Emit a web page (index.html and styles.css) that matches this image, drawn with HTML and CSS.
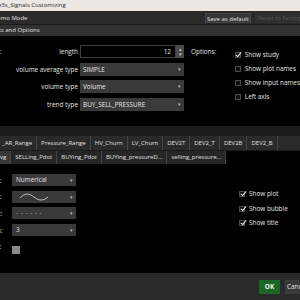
FILE: index.html
```html
<!DOCTYPE html>
<html>
<head>
<meta charset="utf-8">
<link rel="stylesheet" href="styles.css">
</head>
<body>
<div class="titlebar"><span class="title">e3s_Signals Customizing</span></div>
<div class="toolbar">
  <span class="mode">Demo Mode</span>
  <span class="spacer"></span>
  <span class="tbtn save">Save as default</span>
  <span class="tbtn reset">Reset to factory</span>
</div>
<div class="section"><span class="sec-title">Inputs and Options</span></div>
<div class="inputs">
  <div class="fields">
    <div class="frow"><span class="lead">s:</span><span class="lbl">length</span>
      <div class="num"><span class="numval">12</span><span class="spin"><i>▴</i><i>▾</i></span></div></div>
    <div class="frow"><span class="lbl">volume average type</span><div class="dd">SIMPLE<span class="arr">▾</span></div></div>
    <div class="frow"><span class="lbl">volume type</span><div class="dd">Volume<span class="arr">▾</span></div></div>
    <div class="frow"><span class="lbl">trend type</span><div class="dd">BUY_SELL_PRESSURE<span class="arr">▾</span></div></div>
  </div>
  <div class="optlabel">Options:</div>
  <div class="checks">
    <div class="chk"><span class="box on"></span>Show study</div>
    <div class="chk"><span class="box"></span>Show plot names</div>
    <div class="chk"><span class="box"></span>Show input names</div>
    <div class="chk"><span class="box"></span>Left axis</div>
  </div>
</div>
<div class="band"></div>
<div class="tabrow r1">
  <span class="tab first">_AR_Range</span><span class="tab">Pressure_Range</span><span class="tab">HV_Churn</span><span class="tab">LV_Churn</span><span class="tab">DEV2T</span><span class="tab">DEV2_T</span><span class="tab">DEV2B</span><span class="tab">DEV2_B</span>
</div>
<div class="tabrow r2">
  <span class="tab first sel">vg</span><span class="tab">SELLing_Pdot</span><span class="tab">BUYing_Pdot</span><span class="tab">BUYing_pressureD...</span><span class="tab">selling_pressure...</span>
</div>
<div class="plot">
  <div class="pfields">
    <div class="prow"><span class="plbl">s:</span><div class="pdd">Numerical<span class="arr">▾</span></div></div>
    <div class="prow"><span class="plbl">s:</span><div class="pdd"><svg class="wave" width="30" height="8" viewBox="0 0 30 8"><path d="M1 5 C6 0 10 0 15 4 S24 8 29 4" fill="none" stroke="#cfcfcf" stroke-width="0.9"/></svg><span class="arr">▾</span></div></div>
    <div class="prow"><span class="plbl">e:</span><div class="pdd"><span class="dashes">- - - - - -</span><span class="arr">▾</span></div></div>
    <div class="prow"><span class="plbl">h:</span><div class="pdd">3<span class="arr">▾</span></div></div>
    <div class="prow"><span class="plbl">r:</span><span class="swatch"></span></div>
  </div>
  <div class="pchecks">
    <div class="chk"><span class="box on"></span>Show plot</div>
    <div class="chk"><span class="box on"></span>Show bubble</div>
    <div class="chk"><span class="box on"></span>Show title</div>
  </div>
</div>
<div class="footer">
  <span class="ok">OK</span>
  <span class="cancel">Cancel</span>
</div>
</body>
</html>
```
FILE: styles.css
```css
html, body {
  margin: 0;
  padding: 0;
}
body {
  width: 300px;
  height: 300px;
  overflow: hidden;
  background: #000;
  color: #e4e4e4;
  font-family: "Open Sans", "Noto Sans", sans-serif;
  font-size: 6.4px;
  display: flex;
  flex-direction: column;
}
.titlebar {
  height: 11px;
  flex: none;
  background: #ebe7e3;
  color: #2a2a2a;
  font-size: 6px;
  line-height: 11px;
  white-space: nowrap;
  overflow: hidden;
}
.title { margin-left: -2px; }
.toolbar {
  height: 13px;
  flex: none;
  background: #2a2a2a;
  border-bottom: 1px solid #1b1b1b;
  font-size: 6px;
  display: flex;
  align-items: center;
  white-space: nowrap;
  overflow: hidden;
}
.mode { margin-left: -7px; color: #e0e0e0; }
.spacer { flex: 1; }
.tbtn {
  height: 10px;
  line-height: 10px;
  text-align: center;
  box-sizing: border-box;
}
.save {
  width: 46px;
  background: #373737;
  border: 1px solid #454545;
  color: #e6e6e6;
  margin-right: 4px;
}
.reset {
  width: 50px;
  background: #303030;
  color: #5a5a5a;
  margin-right: -5px;
}
.section {
  height: 11px;
  flex: none;
  background: #313131;
  font-size: 6px;
  line-height: 11px;
  white-space: nowrap;
  overflow: hidden;
}
.sec-title { margin-left: -14px; color: #e0e0e0; }
.inputs {
  height: 90px;
  flex: none;
  display: flex;
  padding-top: 9px;
  box-sizing: border-box;
}
.fields {
  width: 186px;
  display: flex;
  flex-direction: column;
  gap: 4.5px;
}
.frow {
  display: flex;
  align-items: center;
  height: 13px;
  position: relative;
}
.lead {
  position: absolute;
  left: -3px;
}
.lbl {
  width: 80px;
  text-align: right;
  padding-right: 2px;
  box-sizing: border-box;
  white-space: nowrap;
}
.num {
  width: 104px;
  height: 13px;
  display: flex;
  box-sizing: border-box;
}
.numval {
  flex: 1;
  border: 1px solid #3e3e3e;
  background: #000;
  text-align: right;
  padding-right: 4px;
  line-height: 11px;
}
.spin {
  width: 8px;
  background: #4a4a4a;
  display: flex;
  flex-direction: column;
  align-items: center;
  justify-content: center;
  font-size: 5px;
  line-height: 5px;
  color: #c8c8c8;
}
.spin i { font-style: normal; }
.dd {
  width: 104px;
  height: 13px;
  background: #3a3a3a;
  line-height: 13px;
  padding-left: 3px;
  box-sizing: border-box;
  position: relative;
  color: #e6e6e6;
}
.arr {
  position: absolute;
  right: 3px;
  top: 0;
  font-size: 5px;
  color: #bbb;
}
.optlabel {
  margin-left: 7px;
  width: 46px;
  height: 13px;
  line-height: 13px;
}
.checks {
  display: flex;
  flex-direction: column;
  padding-top: 3px;
}
.chk {
  height: 14px;
  line-height: 14px;
  display: flex;
  align-items: center;
  white-space: nowrap;
}
.box {
  width: 6px;
  height: 6px;
  border: 1px solid #4a4a4a;
  background: #111;
  margin-right: 4px;
  position: relative;
  box-sizing: border-box;
  flex: none;
}
.box.on::after {
  content: "";
  position: absolute;
  left: 1.5px;
  top: -2px;
  width: 2px;
  height: 5px;
  border-right: 1.2px solid #f0f0f0;
  border-bottom: 1.2px solid #f0f0f0;
  transform: rotate(40deg);
}
.band {
  height: 10px;
  flex: none;
  background: #1c1c1c;
}
.tabrow {
  flex: none;
  display: flex;
  white-space: nowrap;
  overflow: hidden;
  font-size: 6px;
}
.r1 {
  height: 15px;
  background: #2a2a2a;
  border-bottom: 1px solid #1a1a1a;
  box-sizing: border-box;
}
.r2 {
  height: 13px;
  align-self: flex-start;
}
.tab {
  padding: 0 4px;
  border-right: 1px solid #444;
  line-height: 14px;
  background: #2a2a2a;
  color: #e0e0e0;
}
.r2 .tab { line-height: 13px; background: #262626; }
.r2 .tab.sel { background: #3a3a3a; }
.tab.first { padding-left: 2px; }
.r2 .tab.first { padding-left: 0; padding-right: 4px; }
.plot {
  flex: 1;
  display: flex;
  padding-top: 10px;
  box-sizing: border-box;
}
.pfields {
  width: 239px;
  display: flex;
  flex-direction: column;
  gap: 4.7px;
}
.prow {
  display: flex;
  align-items: center;
  height: 12px;
}
.plbl {
  width: 15px;
  margin-left: -3px;
  flex: none;
}
.pdd {
  width: 64px;
  height: 12px;
  background: #393939;
  line-height: 12px;
  padding-left: 4px;
  box-sizing: border-box;
  position: relative;
  display: flex;
  align-items: center;
}
.pdd .arr { line-height: 12px; }
.wave { margin-left: 3px; }
.dashes { color: #aaa; letter-spacing: 0.5px; }
.swatch {
  width: 8px;
  height: 8px;
  background: #8a8a8a;
  margin-top: 6px;
}
.pchecks {
  padding-top: 13px;
  display: flex;
  flex-direction: column;
}
.pchecks .chk { height: 14.5px; line-height: 14.5px; }
.footer {
  height: 27px;
  flex: none;
  background: #2a2a2a;
  display: flex;
  align-items: center;
  justify-content: flex-end;
  gap: 5px;
  overflow: hidden;
}
.ok {
  width: 21px;
  height: 14px;
  line-height: 14px;
  text-align: center;
  background: #1c6626;
  color: #f2f2f2;
  font-weight: bold;
}
.cancel {
  width: 32px;
  height: 14px;
  line-height: 14px;
  background: #3a3a3a;
  padding-left: 2px;
  margin-right: -19px;
  flex: none;
  color: #e0e0e0;
}
```
